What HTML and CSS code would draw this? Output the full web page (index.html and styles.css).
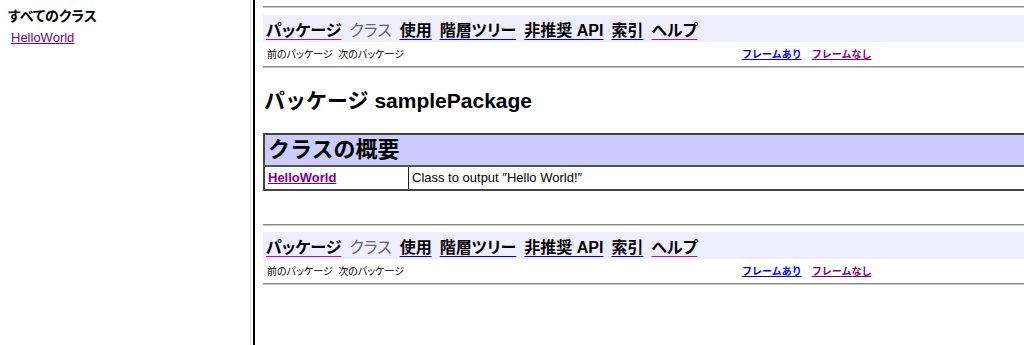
FILE: index.html
```html
<!DOCTYPE html>
<html lang="ja">
<head>
<meta charset="utf-8">
<title>samplePackage</title>
<link rel="stylesheet" href="styles.css">
</head>
<body>
<div class="frames">
  <div class="left">
    <div class="all-title">すべてのクラス</div>
    <a class="class-link" href="#">HelloWorld</a>
  </div>
  <div class="divider"></div>
  <div class="right">
    <div class="content">
      <hr class="rule rule-top">
      <div class="nav">
        <div class="navbar">
          <a class="nav-link visited" href="#">パッケージ</a>
          <span class="nav-current">クラス</span>
          <a class="nav-link" href="#">使用</a>
          <a class="nav-link" href="#">階層ツリー</a>
          <a class="nav-link" href="#">非推奨 API</a>
          <a class="nav-link" href="#">索引</a>
          <a class="nav-link visited" href="#">ヘルプ</a>
        </div>
        <div class="subnav">
          <div class="prevnext">前のパッケージ&nbsp;&nbsp;次のパッケージ</div>
          <div class="frame-links"><a class="frame-link" href="#">フレームあり</a><a class="frame-link visited" href="#">フレームなし</a></div>
        </div>
      </div>
      <hr class="rule">
      <h2 class="pkg-title">パッケージ samplePackage</h2>
      <table class="summary">
        <tr class="summary-head"><th colspan="2">クラスの概要</th></tr>
        <tr class="summary-row">
          <td class="cell-name"><a href="#">HelloWorld</a></td>
          <td class="cell-desc">Class to output ″Hello World!″</td>
        </tr>
      </table>
      <hr class="rule rule-bottom">
      <div class="nav nav-bottom">
        <div class="navbar">
          <a class="nav-link visited" href="#">パッケージ</a>
          <span class="nav-current">クラス</span>
          <a class="nav-link" href="#">使用</a>
          <a class="nav-link" href="#">階層ツリー</a>
          <a class="nav-link" href="#">非推奨 API</a>
          <a class="nav-link" href="#">索引</a>
          <a class="nav-link visited" href="#">ヘルプ</a>
        </div>
        <div class="subnav">
          <div class="prevnext">前のパッケージ&nbsp;&nbsp;次のパッケージ</div>
          <div class="frame-links"><a class="frame-link" href="#">フレームあり</a><a class="frame-link visited" href="#">フレームなし</a></div>
        </div>
      </div>
      <hr class="rule">
    </div>
  </div>
</div>
</body>
</html>
```

FILE: styles.css
```css
html, body {
  margin: 0;
  padding: 0;
  height: 100%;
  background: #fff;
}
body {
  font-family: "Liberation Sans", "Noto Sans CJK JP", sans-serif;
  color: #000;
  overflow: hidden;
}
.frames {
  display: flex;
  height: 345px;
}
.left {
  width: 251px;
  flex: none;
  border-right: 1px solid #dcdcdc;
  padding: 7px 0 0 8px;
  box-sizing: border-box;
}
.all-title {
  font-size: 14px;
  font-weight: bold;
  line-height: 18px;
  font-feature-settings: "palt";
}
.class-link {
  display: inline-block;
  margin: 5px 0 0 3px;
  font-size: 13px;
  line-height: 16px;
  color: #800080;
}
.divider {
  flex: none;
  width: 2px;
  margin-left: 2px;
  background: #000;
}
.right {
  flex: 1;
  min-width: 0;
  overflow: hidden;
}
.content {
  width: 900px;
  padding: 6px 8px 0 8px;
}
.rule {
  margin: 0;
  height: 0;
  border: 0;
  border-top: 1px solid #888;
  border-bottom: 1px solid #c8c8c8;
}
.nav {
  margin-top: 7px;
}
.navbar {
  background: #eeeeff;
  height: 27px;
  display: flex;
  align-items: center;
  gap: 8px;
  padding-left: 3px;
  font-size: 16px;
  font-feature-settings: "palt";
}
.nav-link {
  color: #000;
  font-weight: bold;
  text-decoration: underline;
  text-decoration-color: #0000ee;
  text-underline-offset: 3px;
}
.nav-link.visited {
  text-decoration-color: #a0209a;
}
.nav-current {
  color: #666;
}
.subnav {
  display: grid;
  grid-template-columns: 475px auto;
  height: 22px;
  align-items: center;
  font-size: 10px;
}
.prevnext {
  padding-left: 4px;
  font-feature-settings: "palt";
}
.frame-links {
  padding-left: 4px;
  display: flex;
  gap: 10px;
}
.frame-link {
  color: #0000ee;
  font-weight: bold;
}
.frame-link.visited {
  color: #800080;
}
.content > .rule:not(.rule-top) {
  margin-top: 2px;
}
.pkg-title {
  margin: 21px 0 20px 1px;
  font-size: 21px;
  line-height: 24px;
  font-weight: bold;
}
.summary {
  width: 100%;
  border-collapse: collapse;
  border: 2px solid #444;
}
.summary-head th {
  background: #ccccff;
  text-align: left;
  font-size: 22px;
  line-height: 30px;
  padding: 0 3px;
  border-bottom: 2px solid #555;
}
.summary-row td {
  font-size: 13px;
  line-height: 20px;
  padding: 1px 3px 1px 3px;
}
.cell-name {
  width: 137px;
  border-right: 1px solid #222;
}
.cell-name a {
  color: #800080;
  font-weight: bold;
}
.content > .rule.rule-bottom {
  margin-top: 33px;
}
.nav-bottom {
  margin-top: 6px;
}
```
